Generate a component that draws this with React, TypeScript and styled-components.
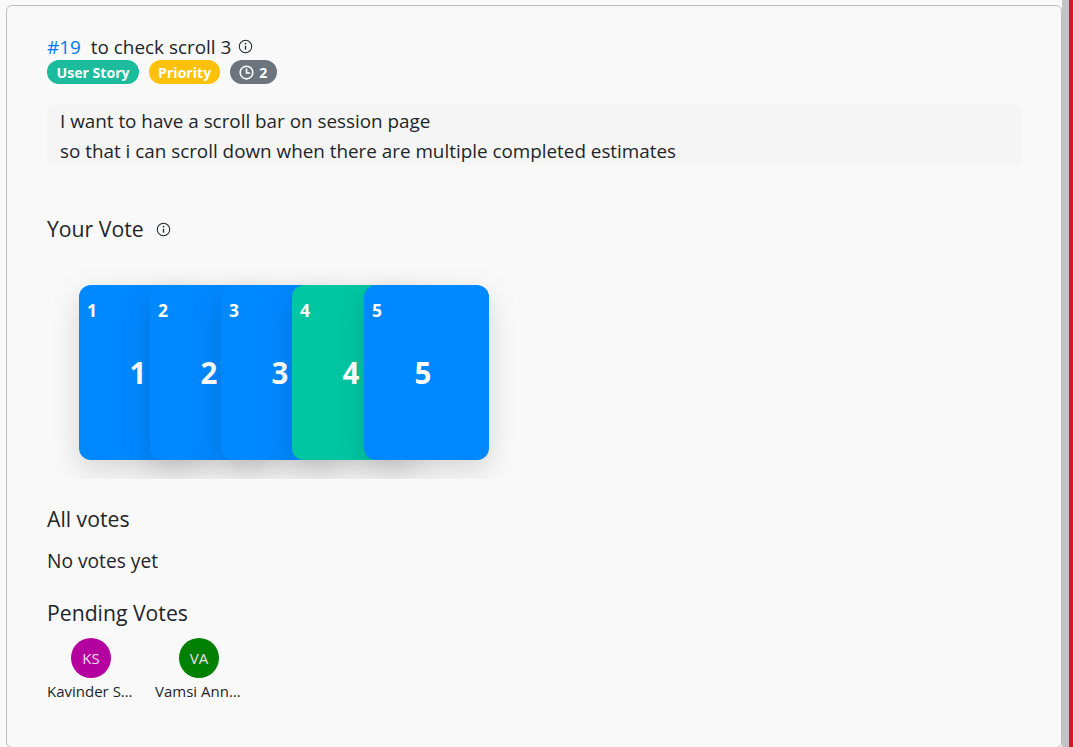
import React from 'react';
import styled, {createGlobalStyle} from "styled-components";

const GlobalStyle = createGlobalStyle`
  html, body {
    margin: 0;
    height: 100%;
    overflow: hidden;
    background: #f9f9f9;
    font-family: 'Open Sans', 'Noto Sans', sans-serif;
    color: #212529;
  }
`

const InfoIcon = ({size}: { size: number }) => (
    <svg width={size} height={size} viewBox="0 0 16 16" fill="none" stroke="#212529" strokeWidth="1.1">
        <circle cx="8" cy="8" r="6.6"/>
        <path d="M8 7.2v4.2" strokeWidth="1.4"/>
        <circle cx="8" cy="4.9" r="0.9" fill="#212529" stroke="none"/>
    </svg>
);

const ClockIcon = () => (
    <svg width="15" height="15" viewBox="0 0 14 14" fill="none" stroke="#fff" strokeWidth="1.5">
        <circle cx="7" cy="7" r="5.9"/>
        <path d="M7 3.2V7.4H10.4"/>
    </svg>
);

const votes = [1, 2, 3, 4, 5];
const pending = [
    {initials: 'KS', name: 'Kavinder Singh', color: '#b4009e'},
    {initials: 'VA', name: 'Vamsi Annamaneni', color: '#008000'},
];

export default function App() {
    return (
        <Page>
            <GlobalStyle/>
            <Card>
                <Title>
                    <StoryId>#19</StoryId>
                    <span>to check scroll 3</span>
                    <InfoIcon size={15}/>
                </Title>
                <Badges>
                    <Badge color="#1abc9c">User Story</Badge>
                    <Badge color="#ffc107">Priority</Badge>
                    <Badge color="#6c757d"><ClockIcon/>2</Badge>
                </Badges>
                <Description>
                    I want to have a scroll bar on session page<br/>
                    so that i can scroll down when there are multiple completed estimates
                </Description>
                <VoteHeading>
                    Your Vote
                    <InfoIcon size={15}/>
                </VoteHeading>
                <Deck>
                    {votes.map(v => (
                        <VoteCard key={v} selected={v === 4}>
                            <Corner>{v}</Corner>
                            <Big>{v}</Big>
                        </VoteCard>
                    ))}
                </Deck>
                <Heading>All votes</Heading>
                <NoVotes>No votes yet</NoVotes>
                <Heading>Pending Votes</Heading>
                <Users>
                    {pending.map(u => (
                        <User key={u.initials}>
                            <Avatar color={u.color}>{u.initials}</Avatar>
                            <UserName>{u.name}</UserName>
                        </User>
                    ))}
                </Users>
            </Card>
            <Scrollbar/>
            <RedEdge/>
        </Page>
    );
}

const Page = styled.div`
  display: flex;
  height: 747px;
  width: 1073px;
  padding: 5px 0 0 6px;
  box-sizing: border-box;
`

const Card = styled.div`
  flex: 1;
  height: 743px;
  box-sizing: border-box;
  border: 1px solid #bdbdbd;
  border-radius: 6px;
  background: #f9f9f9;
  padding: 29px 40px 0;
  min-width: 0;
`

const Title = styled.div`
  display: flex;
  align-items: center;
  font-size: 18.9px;
  line-height: 24px;
  gap: 10px;

  svg {
    margin-left: -3px;
    margin-top: -2px;
  }
`

const StoryId = styled.span`
  color: #007bff;
`

const Badges = styled.div`
  display: flex;
  gap: 10px;
  margin-top: 1px;
`

const Badge = styled.span<{ color: string }>`
  display: inline-flex;
  align-items: center;
  gap: 5px;
  height: 24px;
  padding: 0 9px;
  border-radius: 12px;
  background: ${p => p.color};
  color: #fff;
  font-size: 14.1px;
  font-weight: 700;

  &:first-child {
    padding: 0 9.5px;
  }

  &:last-child {
    padding-right: 10px;
  }
`

const Description = styled.div`
  margin-top: 21px;
  padding: 1px 13px 0;
  width: 975px;
  height: 60px;
  box-sizing: border-box;
  background: #f5f5f5;
  border-radius: 6px;
  font-size: 18.85px;
  line-height: 30px;
`

const Heading = styled.div`
  font-size: 21.2px;
  line-height: 28px;
`

const VoteHeading = styled(Heading)`
  display: flex;
  align-items: center;
  gap: 12px;
  margin-top: 50px;
`

const Deck = styled.div`
  display: flex;
  height: 221px;
  margin-top: 15px;
  padding: 27px 0 0 32px;
  box-sizing: border-box;
  overflow: hidden;
  margin-bottom: 26px;
`

const VoteCard = styled.div<{ selected: boolean }>`
  position: relative;
  flex: none;
  width: 125px;
  height: 175px;
  border-radius: 12px;
  background: ${p => p.selected ? '#00c6a2' : '#0088ff'};
  box-shadow: 0 10px 30px rgba(0, 0, 0, 0.15);
  color: #fff;
  font-weight: 700;

  &:not(:first-child) {
    margin-left: -54px;
  }

  &:last-child:not(:first-child) {
    margin-left: -53px;
  }
`

const Corner = styled.span`
  position: absolute;
  left: 8px;
  top: 14px;
  font-size: 17.5px;
  line-height: 22px;
`

const Big = styled.div`
  display: flex;
  height: 100%;
  align-items: center;
  justify-content: center;
  padding-right: 7px;
  box-sizing: border-box;
  font-size: 29.5px;
`

const NoVotes = styled.div`
  font-size: 19.2px;
  line-height: 24px;
  margin: 16px 0 26px;
`

const Users = styled.div`
  display: flex;
  gap: 20px;
  margin-top: 11px;
`

const User = styled.div`
  display: flex;
  flex-direction: column;
  align-items: center;
  width: 88px;
`

const Avatar = styled.div<{ color: string }>`
  display: flex;
  align-items: center;
  justify-content: center;
  width: 40px;
  height: 40px;
  border-radius: 50%;
  background: ${p => p.color};
  color: #f4dcef;
  font-size: 15px;
`

const UserName = styled.div`
  width: 100%;
  margin-top: 3px;
  font-size: 15px;
  line-height: 20px;
  white-space: nowrap;
  overflow: hidden;
  text-overflow: ellipsis;
`

const Scrollbar = styled.div`
  flex: none;
  width: 7px;
  margin-top: -5px;
  background: #c4c4c4;
`

const RedEdge = styled.div`
  flex: none;
  width: 4px;
  margin-top: -5px;
  background: #dc1426;
`
